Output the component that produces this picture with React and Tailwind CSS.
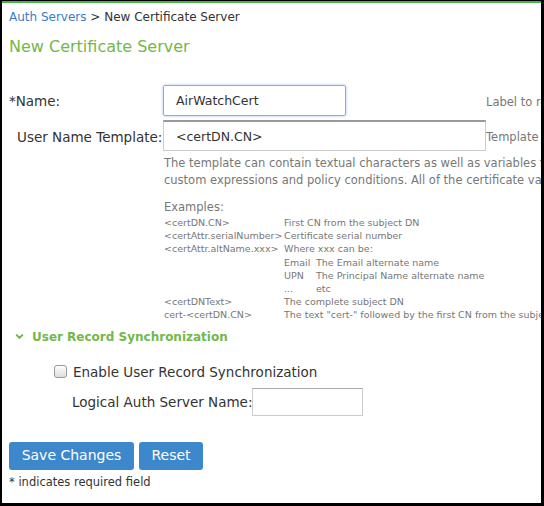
import { ChevronDown } from 'lucide-react';

const examples = [
  ['<certDN.CN>', 'First CN from the subject DN'],
  ['<certAttr.serialNumber>', 'Certificate serial number'],
  ['<certAttr.altName.xxx>', 'Where xxx can be:'],
];

const altNames = [
  ['Email', 'The Email alternate name'],
  ['UPN', 'The Principal Name alternate name'],
  ['...', 'etc'],
];

const examplesTail = [
  ['<certDNText>', 'The complete subject DN'],
  ['cert-<certDN.CN>', 'The text "cert-" followed by the first CN from the subject DN'],
];

function App() {
  return (
    <div className="w-[544px] h-[506px] bg-black pl-[2px] pr-[3px] pb-[3px] pt-px overflow-hidden" style={{ fontFamily: '"DejaVu Sans", Verdana, sans-serif' }}>
      <div className="h-full bg-white border-t-2 border-[#4caf50] overflow-hidden relative">
        <div className="pl-[7px] pt-[5px]">
          {/* breadcrumb */}
          <div className="text-[12px] leading-[18px] text-[#333] whitespace-nowrap">
            <span className="text-[#3a7bc8]">Auth Servers</span> &gt; New Certificate Server
          </div>
          <h1 className="text-[16px] leading-[22px] text-[#72b84a] mt-[10px] whitespace-nowrap">New Certificate Server</h1>

          {/* form rows */}
          <div className="mt-[27px]">
            <div className="flex items-center h-[31px]">
              <label className="w-[154px] shrink-0 text-[13.5px] text-[#333] mt-[2px]">*Name:</label>
              <div className="w-[323px] shrink-0">
                <input
                  defaultValue="AirWatchCert"
                  className="w-[183px] h-[31px] border border-[#7faee6] shadow-[0_0_3px_rgba(102,153,230,0.6)] rounded-[2px] px-[12px] text-[12.5px] text-[#333] outline-none"
                />
              </div>
              <span className="text-[11.5px] text-[#777] whitespace-nowrap mt-[4px]">Label to reference this server.</span>
            </div>

            <div className="flex items-center h-[31px] mt-[4px]">
              <label className="w-[154px] shrink-0 pl-[8px] text-[13.5px] text-[#333] whitespace-nowrap mt-[3px]">User Name Template:</label>
              <input
                defaultValue="<certDN.CN>"
                className="w-[323px] shrink-0 h-[31px] border border-[#ccc] border-t-[#999] border-t-2 px-[12px] text-[12.5px] text-[#333] outline-none"
              />
              <span className="text-[11.5px] text-[#777] whitespace-nowrap mt-[4px]">Template for constructing user names</span>
            </div>

            <div className="ml-[155px] mt-[4px] text-[11.5px] leading-[17px] text-[#777] whitespace-nowrap">
              <p>The template can contain textual characters as well as variables for substitution. Variables should be</p>
              <p>custom expressions and policy conditions. All of the certificate variables are available.</p>

              <p className="mt-[10px]">Examples:</p>
              <div className="text-[9.5px] leading-[13.2px]">
                {examples.map(([k, v]) => (
                  <div key={k} className="flex">
                    <span className="w-[120px] shrink-0">{k}</span>
                    <span>{v}</span>
                  </div>
                ))}
                {altNames.map(([k, v]) => (
                  <div key={k} className="flex pl-[120px]">
                    <span className="w-[32px] shrink-0">{k}</span>
                    <span>{v}</span>
                  </div>
                ))}
                {examplesTail.map(([k, v]) => (
                  <div key={k} className="flex">
                    <span className="w-[120px] shrink-0">{k}</span>
                    <span>{v}</span>
                  </div>
                ))}
              </div>
            </div>
          </div>

          {/* user record sync */}
          <div className="mt-[6px] flex items-center gap-[7px] pl-[5px] text-[12px] font-bold text-[#72b84a] whitespace-nowrap">
            <ChevronDown size={11} strokeWidth={4.5} />
            <span>User Record Synchronization</span>
          </div>

          <div className="mt-[16px] pl-[45px] flex items-center gap-[6px] text-[13.5px] text-[#333] whitespace-nowrap">
            <span className="w-[13px] h-[13px] rounded-[3px] border border-[#999] bg-gradient-to-b from-white to-[#ddd]"></span>
            <span>Enable User Record Synchronization</span>
          </div>

          <div className="mt-[6px] pl-[63px] flex items-center text-[13.5px] text-[#333] whitespace-nowrap">
            <label>Logical Auth Server Name:</label>
            <input className="w-[111px] h-[28px] border border-[#ccc] border-t-[#aaa] outline-none" />
          </div>

          <div className="mt-[26px] flex gap-[5px]">
            <button className="w-[125px] h-[28px] rounded-[3px] bg-[#3d88cc] text-white text-[14px]">Save Changes</button>
            <button className="w-[64px] h-[28px] rounded-[3px] bg-[#3d88cc] text-white text-[14px]">Reset</button>
          </div>
          <p className="mt-[4px] text-[11.5px] text-[#333]">* indicates required field</p>
        </div>
      </div>
    </div>
  );
}

export default App;
